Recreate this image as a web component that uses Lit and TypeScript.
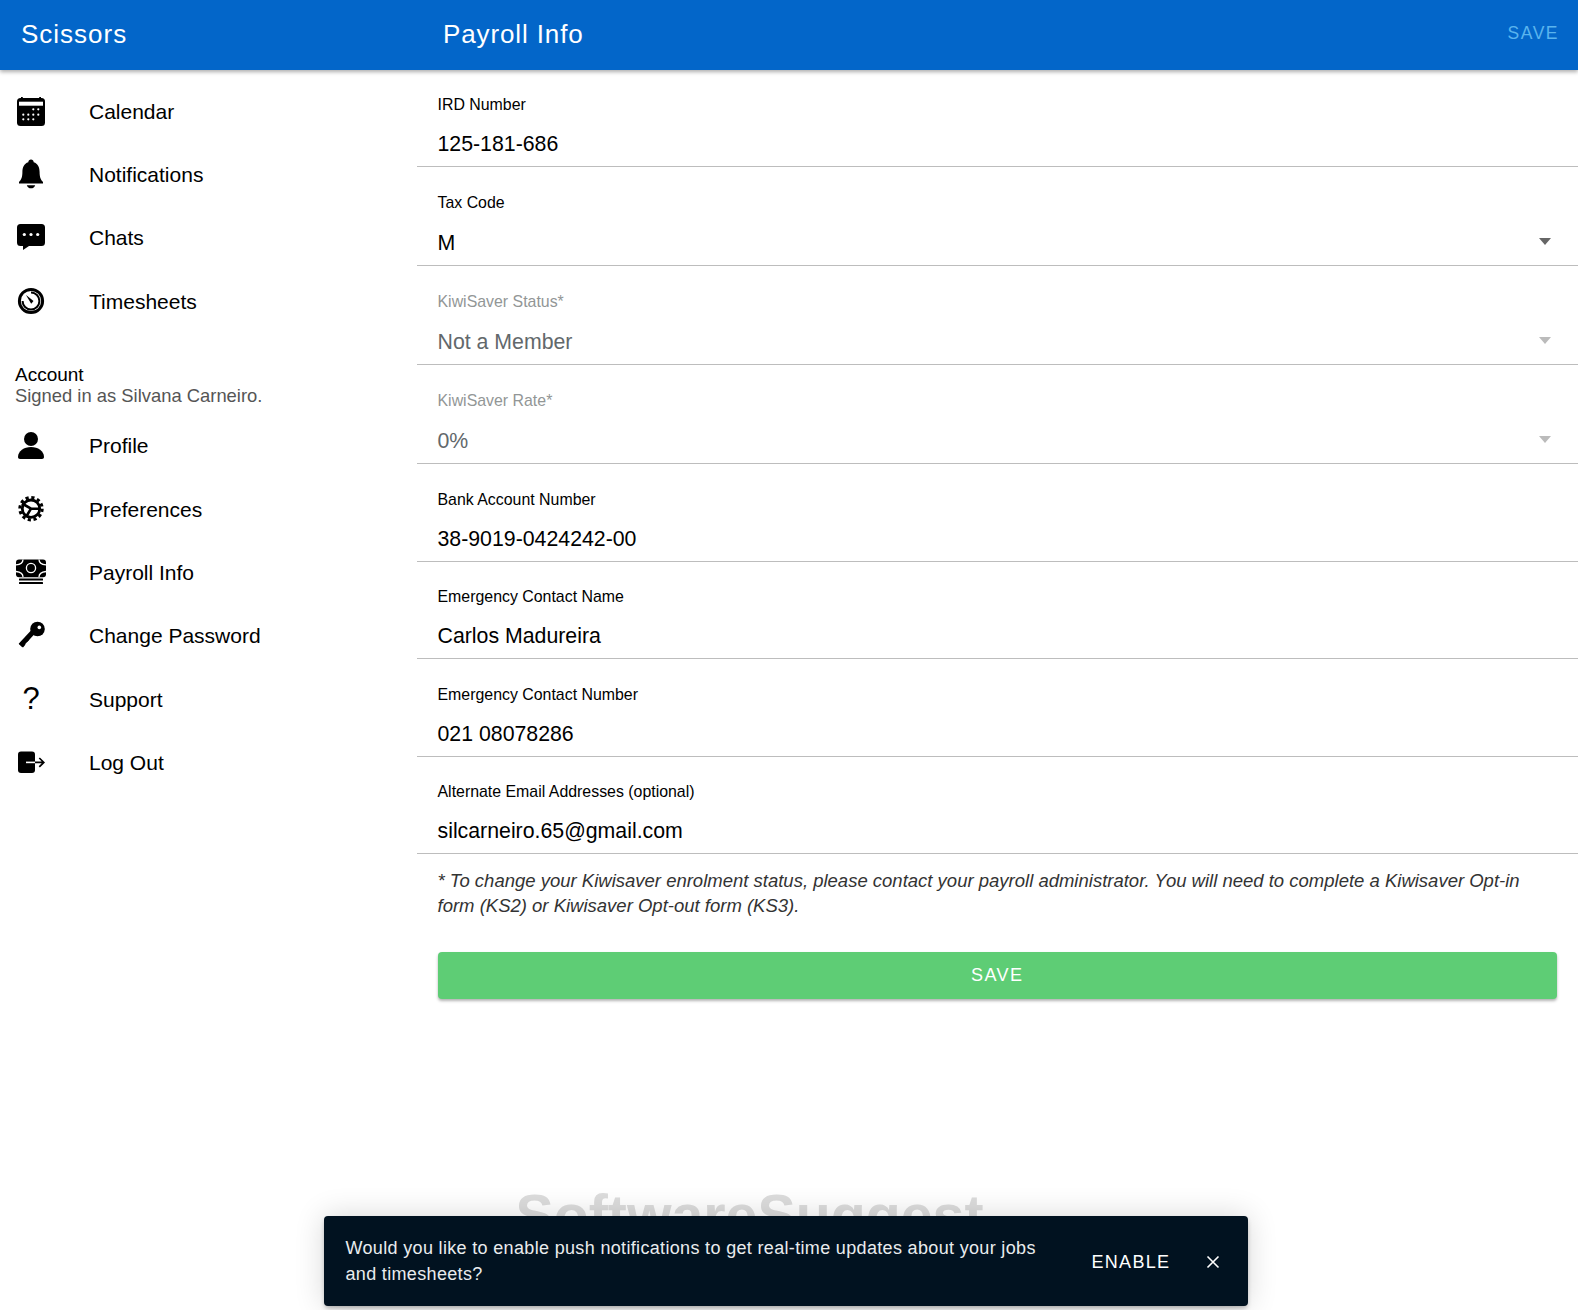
import { LitElement, html, css, svg } from "lit";
import { customElement } from "lit/decorators.js";

const ic = (body: unknown) => html`<svg class="ic" viewBox="0 0 32 32" width="32" height="32">${body}</svg>`;

const dot = (x: number, y: number, r = 1.1) => svg`<circle cx=${x} cy=${y} r=${r} fill="#fff"></circle>`;

const icons: Record<string, unknown> = {
  calendar: ic(svg`
    <rect x="2" y="2" width="28" height="28" rx="3.5" fill="#000"></rect>
    <rect x="6" y="1" width="1.8" height="4" fill="#000"></rect><rect x="24.2" y="1" width="1.8" height="4" fill="#000"></rect>
    <rect x="4" y="5.7" width="24" height="4" fill="#fff"></rect>
    ${dot(18.3, 13.3)}${dot(23.3, 13.3)}
    ${dot(8.3, 18.7)}${dot(13.3, 18.7)}${dot(18.3, 18.7)}${dot(23.3, 18.7)}
    ${dot(8.3, 23.3)}${dot(13.3, 23.3)}${dot(18.3, 23.3)}`),
  bell: ic(svg`
    <path d="M16 .6c1.5 0 2.6 1.1 2.7 2.6C23 4.5 24.6 8.5 24.6 13c0 5 1 7.6 3.4 10v1.6H4V23c2.4-2.4 3.4-5 3.4-10 0-4.5 1.6-8.5 5.9-9.8C13.4 1.7 14.5.6 16 .6z"></path>
    <path d="M11.8 26.2h8.4c-.5 2-2.2 3.1-4.2 3.1s-3.7-1.1-4.2-3.1z"></path>`),
  chat: ic(svg`
    <path d="M5.5 2h21A3.5 3.5 0 0 1 30 5.5v15a3.5 3.5 0 0 1-3.5 3.5H14l-6 4v-4H5.5A3.5 3.5 0 0 1 2 20.5v-15A3.5 3.5 0 0 1 5.5 2z"></path>
    ${dot(9.3, 12.5, 1.6)}${dot(16, 12.5, 1.6)}${dot(22.7, 12.5, 1.6)}`),
  timer: ic(svg`
    <circle cx="16" cy="15" r="11.6" fill="none" stroke="#000" stroke-width="3"></circle>
    <path d="M16 6.6A8.4 8.4 0 1 1 7.6 15" fill="none" stroke="#000" stroke-width="2"></path>
    <path d="M11 9l7.5 6-2.3 2.7z"></path>`),
  user: ic(svg`
    <circle cx="16" cy="9" r="7"></circle>
    <path d="M3 27c0-6 6-10 13-10s13 4 13 10c0 1.2-.8 2-2 2H5c-1.2 0-2-.8-2-2z"></path>`),
  gear: ic(svg`
    <circle cx="16" cy="14.7" r="11.2" fill="none" stroke="#000" stroke-width="3" stroke-dasharray="3.2 2.66"></circle>
    <circle cx="16" cy="14.7" r="8.7" fill="none" stroke="#000" stroke-width="2.8"></circle>
    <path d="M16 14.7L7 9.5M16 14.7L25 14.7M16 14.7L11 23" fill="none" stroke="#000" stroke-width="2.6"></path>`),
  money: ic(svg`
    <rect x="1" y="2.4" width="30" height="17.8" rx="3"></rect>
    <rect x="4" y="21.4" width="24" height="2" rx=".5"></rect><rect x="4" y="25" width="24" height="2" rx=".5"></rect>
    <circle cx="16" cy="11" r="4.6" fill="none" stroke="#fff" stroke-width="1.3"></circle>
    <path d="M8 2.4c0 3-2.5 5-7 5.5M24 2.4c0 3 2.5 5 7 5.5M1 14.5c4.5.5 7 2.5 7 5.5M31 14.5c-4.5.5-7 2.5-7 5.5" fill="none" stroke="#fff" stroke-width="1.3"></path>`),
  key: ic(svg`
    <circle cx="22.5" cy="9" r="7.3"></circle>
    <path d="M18 12L5.5 25.5" stroke="#000" stroke-width="5" fill="none"></path>
    <path d="M6.5 21l4 3.5-2.5 3-4-3.5zM11 17l3.3 2.7-2.3 2.3-3.3-2.7z"></path>
    <circle cx="24.3" cy="7.4" r="1.8" fill="#fff"></circle>`),
  logout: ic(svg`
    <rect x="3" y="4.4" width="17" height="21.6" rx="3"></rect>
    <path d="M11 15.4h9" stroke="#fff" stroke-width="1.6" fill="none"></path>
    <path d="M20 15.4h8.5M24.3 11l4.5 4.4-4.5 4.4" stroke="#000" stroke-width="1.7" fill="none"></path>`),
};

const top = [
  ["Calendar", "calendar"],
  ["Notifications", "bell"],
  ["Chats", "chat"],
  ["Timesheets", "timer"],
];
const account = [
  ["Profile", "user"],
  ["Preferences", "gear"],
  ["Payroll Info", "money"],
  ["Change Password", "key"],
  ["Support", "help"],
  ["Log Out", "logout"],
];
const fields = [
  { label: "IRD Number", value: "125-181-686" },
  { label: "Tax Code", value: "M", select: true },
  { label: "KiwiSaver Status*", value: "Not a Member", select: true, disabled: true },
  { label: "KiwiSaver Rate*", value: "0%", select: true, disabled: true },
  { label: "Bank Account Number", value: "38-9019-0424242-00" },
  { label: "Emergency Contact Name", value: "Carlos Madureira" },
  { label: "Emergency Contact Number", value: "021 08078286" },
  { label: "Alternate Email Addresses (optional)", value: "silcarneiro.65@gmail.com" },
];

@customElement("app-root")
export class AppRoot extends LitElement {
  static styles = css`
    :host {
      display: block;
      position: relative;
      height: 1310px;
      overflow: hidden;
      background: #fff;
      color: #000;
      font-family: "Liberation Sans", Arial, sans-serif;
    }
    .bar {
      position: relative;
      z-index: 2;
      display: flex;
      align-items: center;
      height: 69.5px;
      background: #0366c9;
      color: #fff;
      box-shadow: 0 2px 4px rgba(0, 0, 0, 0.32);
    }
    .brand {
      width: 422px;
      padding-left: 21px;
      font-size: 26px;
      letter-spacing: 1px;
    }
    .title {
      flex: 1;
      font-size: 26px;
      letter-spacing: 0.88px;
    }
    .bar-save {
      padding: 0 19px 3px 0;
      font-size: 17.5px;
      letter-spacing: 1.5px;
      color: #5ab4ee;
    }
    .main {
      display: flex;
    }
    .side {
      width: 417px;
      flex: none;
      padding-top: 10.5px;
      box-sizing: border-box;
    }
    .row {
      display: flex;
      align-items: center;
      height: 63.3px;
      padding-left: 15px;
      font-size: 21px;
    }
    .ic {
      display: block;
      flex: none;
      width: 32px;
      height: 32px;
    }
    .help {
      width: 32px;
      flex: none;
      text-align: center;
      font-size: 31px;
      line-height: 32px;
      margin-top: -1px;
    }
    .label {
      margin-left: 42px;
    }
    .acct {
      padding: 31px 0 8.5px 15px;
      font-size: 19px;
      line-height: 21px;
    }
    .acct div + div {
      color: #555;
      font-size: 18.4px;
    }
    .form {
      flex: 1;
      min-width: 0;
    }
    .field {
      position: relative;
      height: 97.5px;
      box-sizing: border-box;
      padding: 25.5px 20.5px 0;
      border-bottom: 1px solid #bdbdbd;
    }
    .field.select {
      height: 99px;
      padding-top: 25.7px;
    }
    .flabel {
      font-size: 15.9px;
      line-height: 20px;
    }
    .fvalue {
      margin-top: 14px;
      font-size: 21.3px;
      line-height: 30px;
    }
    .select .fvalue {
      margin-top: 15.5px;
    }
    .disabled .flabel {
      color: #929696;
    }
    .disabled .fvalue {
      color: #62686b;
    }
    .arrow {
      position: absolute;
      right: 27.5px;
      top: 71px;
      border-left: 6.5px solid transparent;
      border-right: 6.5px solid transparent;
      border-top: 7px solid #666;
    }
    .disabled .arrow {
      border-top-color: #bbb;
    }
    .note {
      margin: 0;
      padding: 14px 20.5px 0;
      font-size: 18.5px;
      font-style: italic;
      line-height: 25.3px;
      color: #333;
    }
    .save {
      display: flex;
      align-items: center;
      justify-content: center;
      height: 47.5px;
      box-sizing: border-box;
      padding-top: 1px;
      margin: 33px 21px 0 20.5px;
      border-radius: 4px;
      background: #5ecd75;
      color: #fff;
      font-size: 18px;
      letter-spacing: 1.5px;
      box-shadow: 0 2px 3px rgba(0, 0, 0, 0.3);
    }
    .mark {
      position: absolute;
      left: 515.5px;
      top: 1183px;
      white-space: nowrap;
      font-size: 57.3px;
      line-height: 65px;
      font-weight: bold;
      color: #dcdcdc;
    }
    .mark span {
      font-size: 32px;
      font-weight: bold;
    }
    .toast {
      position: absolute;
      left: 324px;
      top: 1216px;
      width: 924px;
      height: 90px;
      box-sizing: border-box;
      display: flex;
      align-items: center;
      padding-left: 21.5px;
      border-radius: 4px;
      background: #011220;
      color: #e9ecee;
      box-shadow: 0 3px 5px -1px rgba(0, 0, 0, 0.3), 0 0 30px rgba(0, 0, 0, 0.16);
    }
    .msg {
      width: 704px;
      flex: none;
      font-size: 18px;
      line-height: 26px;
      letter-spacing: 0.335px;
    }
    .enable {
      margin-left: 42px;
      margin-top: 2px;
      font-size: 18px;
      letter-spacing: 1.3px;
      color: #fff;
    }
    .close {
      display: block;
      margin-left: 36px;
      margin-top: 1px;
    }
  `;

  private navRow(item: string[]) {
    const [name, icon] = item;
    return html`<div class="row">
      ${icon === "help" ? html`<span class="help">?</span>` : icons[icon]}
      <span class="label">${name}</span>
    </div>`;
  }

  render() {
    return html`
      <header class="bar">
        <div class="brand">Scissors</div>
        <div class="title">Payroll Info</div>
        <div class="bar-save">SAVE</div>
      </header>
      <div class="main">
        <nav class="side">
          ${top.map((i) => this.navRow(i))}
          <div class="acct">
            <div>Account</div>
            <div>Signed in as Silvana Carneiro.</div>
          </div>
          ${account.map((i) => this.navRow(i))}
        </nav>
        <section class="form">
          ${fields.map(
            (f) => html`<div class="field ${f.select ? "select" : ""} ${f.disabled ? "disabled" : ""}">
              <div class="flabel">${f.label}</div>
              <div class="fvalue">${f.value}</div>
              ${f.select ? html`<span class="arrow"></span>` : ""}
            </div>`
          )}
          <p class="note">
            * To change your Kiwisaver enrolment status, please contact your payroll administrator. You will need to
            complete a Kiwisaver Opt-in form (KS2) or Kiwisaver Opt-out form (KS3).
          </p>
          <div class="save">SAVE</div>
        </section>
      </div>
      <div class="mark">SoftwareSuggest<span>.com</span></div>
      <div class="toast">
        <div class="msg">
          Would you like to enable push notifications to get real-time updates about your jobs and timesheets?
        </div>
        <div class="enable">ENABLE</div>
        <svg class="close" width="14" height="14" viewBox="0 0 14 14">
          <path d="M1.5 1.5l11 11M12.5 1.5l-11 11" stroke="#fff" stroke-width="1.6" fill="none"></path>
        </svg>
      </div>
    `;
  }
}
